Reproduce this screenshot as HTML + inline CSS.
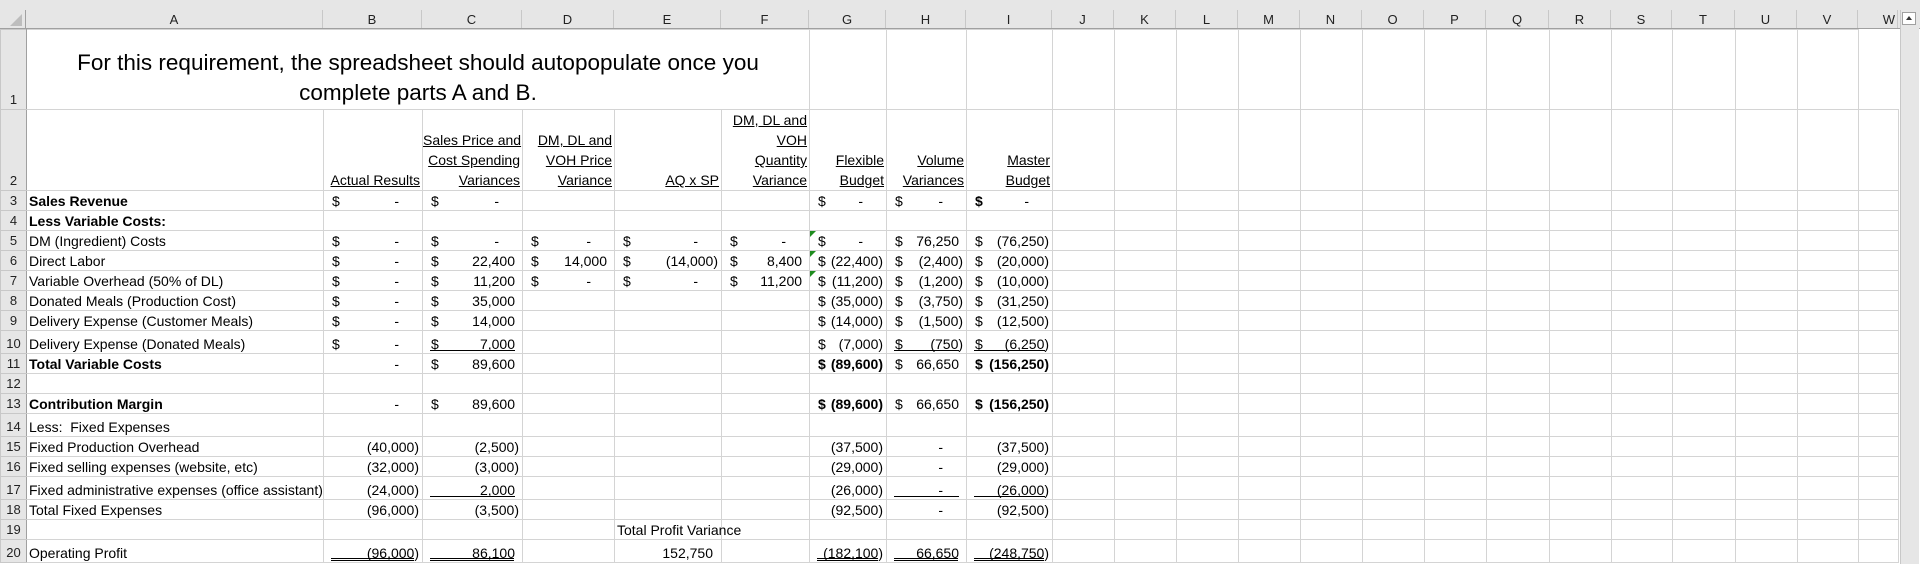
<!DOCTYPE html>
<html><head><meta charset="utf-8">
<style>
body{margin:0;width:1920px;height:564px;overflow:hidden;background:#fff;font-family:"Liberation Sans",Arial,sans-serif;font-size:14px;color:#000;position:relative}
#hdr{position:absolute;left:0;top:0;width:1920px;height:29px;background:#e6e6e6;border-bottom:1px solid #a0a0a0;box-sizing:border-box}
.ch{position:absolute;top:10px;height:18px;line-height:19px;text-align:center;font-size:13px;color:#222;border-right:1px solid #c8c8c8;box-sizing:border-box}
#tbl{position:absolute;left:0;top:29px;border-collapse:collapse;table-layout:fixed;width:1898px}
#tbl td{border:1px solid #d4d4d4;padding:0;vertical-align:bottom;line-height:18px;white-space:nowrap;overflow:visible;position:relative}
#tbl td.rh{background:#e6e6e6;border-color:#c8c8c8;border-right:1px solid #a0a0a0;text-align:center;font-size:13px;color:#222}
td.l{padding-left:2px!important}
.b{font-weight:bold}
.ac{display:flex;justify-content:space-between;padding:0 3px 0 8px}
.r{text-align:right;padding-right:3px!important}
.p{padding-right:4px}
.z{padding-right:20px}
.u::after{content:"";position:absolute;left:7px;right:7px;bottom:2px;border-bottom:1px solid #000}
.dd::after{content:"";position:absolute;left:7px;right:8px;bottom:1px;border-bottom:3px double #000}
.tri::before{content:"";position:absolute;left:0;top:0;border-top:6px solid #1e8c1e;border-right:6px solid transparent}
.hd span{text-decoration:underline}
.hd{text-align:right;padding-right:2px!important;line-height:20px!important}
#sb{position:absolute;left:1900px;top:10px;width:18px;height:554px;background:#e6e6e6;border-left:1px solid #c8c8c8}
#sbt{position:absolute;left:1902px;top:12px;width:14px;height:13px;background:#fff;border:1px solid #a0a0a0;box-sizing:border-box}
</style></head><body>
<div id="hdr">
<div style="position:absolute;left:10px;top:14px;width:0;height:0;border-left:12px solid transparent;border-bottom:12px solid #bdbdbd"></div>
<div class="ch" style="left:0;width:26px;border-right:1px solid #a0a0a0"></div>
<div class="ch" style="left:26px;width:297px">A</div>
<div class="ch" style="left:323px;width:99px">B</div>
<div class="ch" style="left:422px;width:100px">C</div>
<div class="ch" style="left:522px;width:92px">D</div>
<div class="ch" style="left:614px;width:107px">E</div>
<div class="ch" style="left:721px;width:88px">F</div>
<div class="ch" style="left:809px;width:77px">G</div>
<div class="ch" style="left:886px;width:80px">H</div>
<div class="ch" style="left:966px;width:86px">I</div>
<div class="ch" style="left:1052px;width:62px">J</div>
<div class="ch" style="left:1114px;width:62px">K</div>
<div class="ch" style="left:1176px;width:62px">L</div>
<div class="ch" style="left:1238px;width:62px">M</div>
<div class="ch" style="left:1300px;width:62px">N</div>
<div class="ch" style="left:1362px;width:62px">O</div>
<div class="ch" style="left:1424px;width:62px">P</div>
<div class="ch" style="left:1486px;width:63px">Q</div>
<div class="ch" style="left:1549px;width:62px">R</div>
<div class="ch" style="left:1611px;width:61px">S</div>
<div class="ch" style="left:1672px;width:63px">T</div>
<div class="ch" style="left:1735px;width:62px">U</div>
<div class="ch" style="left:1797px;width:61px">V</div>
<div class="ch" style="left:1858px;width:40px;text-align:right;padding-right:2px">W</div>
</div>
<table id="tbl">
<colgroup><col style="width:26px"><col style="width:297px"><col style="width:99px"><col style="width:100px"><col style="width:92px"><col style="width:107px"><col style="width:88px"><col style="width:77px"><col style="width:80px"><col style="width:86px"><col style="width:62px"><col style="width:62px"><col style="width:62px"><col style="width:62px"><col style="width:62px"><col style="width:62px"><col style="width:62px"><col style="width:63px"><col style="width:62px"><col style="width:61px"><col style="width:63px"><col style="width:62px"><col style="width:61px"><col style="width:40px"></colgroup>
<tr style="height:80px"><td class="rh">1</td><td colspan="6" style="text-align:center;font-size:22.5px;line-height:30px;padding-bottom:1px">For this requirement, the spreadsheet should autopopulate once you<br>complete parts A and B.</td><td></td><td></td><td></td><td></td><td></td><td></td><td></td><td></td><td></td><td></td><td></td><td></td><td></td><td></td><td></td><td></td></tr>
<tr style="height:80px"><td class="rh">2</td><td></td><td class="hd"><span>Actual Results</span></td><td class="hd"><span>Sales Price and</span><br><span>Cost Spending</span><br><span>Variances</span></td><td class="hd"><span>DM, DL and</span><br><span>VOH Price</span><br><span>Variance</span></td><td class="hd"><span>AQ x SP</span></td><td class="hd"><span>DM, DL and</span><br><span>VOH</span><br><span>Quantity</span><br><span>Variance</span></td><td class="hd"><span>Flexible</span><br><span>Budget</span></td><td class="hd"><span>Volume</span><br><span>Variances</span></td><td class="hd"><span>Master</span><br><span>Budget</span></td><td></td><td></td><td></td><td></td><td></td><td></td><td></td><td></td><td></td><td></td><td></td><td></td><td></td><td></td></tr>
<tr style="height:20px"><td class="rh">3</td><td class="l b">Sales Revenue</td><td><div class="ac"><span>$</span><span class="z">-</span></div></td><td><div class="ac"><span>$</span><span class="z">-</span></div></td><td></td><td></td><td></td><td><div class="ac"><span>$</span><span class="z">-</span></div></td><td><div class="ac"><span>$</span><span class="z">-</span></div></td><td><div class="ac"><span class="b">$</span><span class="z">-</span></div></td><td></td><td></td><td></td><td></td><td></td><td></td><td></td><td></td><td></td><td></td><td></td><td></td><td></td><td></td></tr>
<tr style="height:20px"><td class="rh">4</td><td class="l b">Less Variable Costs:</td><td></td><td></td><td></td><td></td><td></td><td></td><td></td><td></td><td></td><td></td><td></td><td></td><td></td><td></td><td></td><td></td><td></td><td></td><td></td><td></td><td></td><td></td></tr>
<tr style="height:20px"><td class="rh">5</td><td class="l">DM (Ingredient) Costs</td><td><div class="ac"><span>$</span><span class="z">-</span></div></td><td><div class="ac"><span>$</span><span class="z">-</span></div></td><td><div class="ac"><span>$</span><span class="z">-</span></div></td><td><div class="ac"><span>$</span><span class="z">-</span></div></td><td><div class="ac"><span>$</span><span class="z">-</span></div></td><td class="tri"><div class="ac"><span>$</span><span class="z">-</span></div></td><td><div class="ac"><span>$</span><span class="p">76,250</span></div></td><td><div class="ac"><span>$</span><span>(76,250)</span></div></td><td></td><td></td><td></td><td></td><td></td><td></td><td></td><td></td><td></td><td></td><td></td><td></td><td></td><td></td></tr>
<tr style="height:20px"><td class="rh">6</td><td class="l">Direct Labor</td><td><div class="ac"><span>$</span><span class="z">-</span></div></td><td><div class="ac"><span>$</span><span class="p">22,400</span></div></td><td><div class="ac"><span>$</span><span class="p">14,000</span></div></td><td><div class="ac"><span>$</span><span>(14,000)</span></div></td><td><div class="ac"><span>$</span><span class="p">8,400</span></div></td><td class="tri"><div class="ac"><span>$</span><span>(22,400)</span></div></td><td><div class="ac"><span>$</span><span>(2,400)</span></div></td><td><div class="ac"><span>$</span><span>(20,000)</span></div></td><td></td><td></td><td></td><td></td><td></td><td></td><td></td><td></td><td></td><td></td><td></td><td></td><td></td><td></td></tr>
<tr style="height:20px"><td class="rh">7</td><td class="l">Variable Overhead (50% of DL)</td><td><div class="ac"><span>$</span><span class="z">-</span></div></td><td><div class="ac"><span>$</span><span class="p">11,200</span></div></td><td><div class="ac"><span>$</span><span class="z">-</span></div></td><td><div class="ac"><span>$</span><span class="z">-</span></div></td><td><div class="ac"><span>$</span><span class="p">11,200</span></div></td><td class="tri"><div class="ac"><span>$</span><span>(11,200)</span></div></td><td><div class="ac"><span>$</span><span>(1,200)</span></div></td><td><div class="ac"><span>$</span><span>(10,000)</span></div></td><td></td><td></td><td></td><td></td><td></td><td></td><td></td><td></td><td></td><td></td><td></td><td></td><td></td><td></td></tr>
<tr style="height:20px"><td class="rh">8</td><td class="l">Donated Meals (Production Cost)</td><td><div class="ac"><span>$</span><span class="z">-</span></div></td><td><div class="ac"><span>$</span><span class="p">35,000</span></div></td><td></td><td></td><td></td><td><div class="ac"><span>$</span><span>(35,000)</span></div></td><td><div class="ac"><span>$</span><span>(3,750)</span></div></td><td><div class="ac"><span>$</span><span>(31,250)</span></div></td><td></td><td></td><td></td><td></td><td></td><td></td><td></td><td></td><td></td><td></td><td></td><td></td><td></td><td></td></tr>
<tr style="height:20px"><td class="rh">9</td><td class="l">Delivery Expense (Customer Meals)</td><td><div class="ac"><span>$</span><span class="z">-</span></div></td><td><div class="ac"><span>$</span><span class="p">14,000</span></div></td><td></td><td></td><td></td><td><div class="ac"><span>$</span><span>(14,000)</span></div></td><td><div class="ac"><span>$</span><span>(1,500)</span></div></td><td><div class="ac"><span>$</span><span>(12,500)</span></div></td><td></td><td></td><td></td><td></td><td></td><td></td><td></td><td></td><td></td><td></td><td></td><td></td><td></td><td></td></tr>
<tr style="height:23px"><td class="rh">10</td><td class="l">Delivery Expense (Donated Meals)</td><td><div class="ac"><span>$</span><span class="z">-</span></div></td><td class="u"><div class="ac"><span>$</span><span class="p">7,000</span></div></td><td></td><td></td><td></td><td><div class="ac"><span>$</span><span>(7,000)</span></div></td><td class="u"><div class="ac"><span>$</span><span>(750)</span></div></td><td class="u"><div class="ac"><span>$</span><span>(6,250)</span></div></td><td></td><td></td><td></td><td></td><td></td><td></td><td></td><td></td><td></td><td></td><td></td><td></td><td></td><td></td></tr>
<tr style="height:20px"><td class="rh">11</td><td class="l b">Total Variable Costs</td><td><div class="ac"><span></span><span class="z">-</span></div></td><td><div class="ac"><span>$</span><span class="p">89,600</span></div></td><td></td><td></td><td></td><td><div class="ac b"><span>$</span><span>(89,600)</span></div></td><td><div class="ac"><span>$</span><span class="p">66,650</span></div></td><td><div class="ac b"><span>$</span><span>(156,250)</span></div></td><td></td><td></td><td></td><td></td><td></td><td></td><td></td><td></td><td></td><td></td><td></td><td></td><td></td><td></td></tr>
<tr style="height:20px"><td class="rh">12</td><td></td><td></td><td></td><td></td><td></td><td></td><td></td><td></td><td></td><td></td><td></td><td></td><td></td><td></td><td></td><td></td><td></td><td></td><td></td><td></td><td></td><td></td><td></td></tr>
<tr style="height:20px"><td class="rh">13</td><td class="l b">Contribution Margin</td><td><div class="ac"><span></span><span class="z">-</span></div></td><td><div class="ac"><span>$</span><span class="p">89,600</span></div></td><td></td><td></td><td></td><td><div class="ac b"><span>$</span><span>(89,600)</span></div></td><td><div class="ac"><span>$</span><span class="p">66,650</span></div></td><td><div class="ac b"><span>$</span><span>(156,250)</span></div></td><td></td><td></td><td></td><td></td><td></td><td></td><td></td><td></td><td></td><td></td><td></td><td></td><td></td><td></td></tr>
<tr style="height:23px"><td class="rh">14</td><td class="l" style="white-space:pre">Less:  Fixed Expenses</td><td></td><td></td><td></td><td></td><td></td><td></td><td></td><td></td><td></td><td></td><td></td><td></td><td></td><td></td><td></td><td></td><td></td><td></td><td></td><td></td><td></td><td></td></tr>
<tr style="height:20px"><td class="rh">15</td><td class="l">Fixed Production Overhead</td><td class="r">(40,000)</td><td class="r">(2,500)</td><td></td><td></td><td></td><td class="r">(37,500)</td><td class="r"><span class="z">-</span></td><td class="r">(37,500)</td><td></td><td></td><td></td><td></td><td></td><td></td><td></td><td></td><td></td><td></td><td></td><td></td><td></td><td></td></tr>
<tr style="height:20px"><td class="rh">16</td><td class="l">Fixed selling expenses (website, etc)</td><td class="r">(32,000)</td><td class="r">(3,000)</td><td></td><td></td><td></td><td class="r">(29,000)</td><td class="r"><span class="z">-</span></td><td class="r">(29,000)</td><td></td><td></td><td></td><td></td><td></td><td></td><td></td><td></td><td></td><td></td><td></td><td></td><td></td><td></td></tr>
<tr style="height:23px"><td class="rh">17</td><td class="l">Fixed administrative expenses (office assistant)</td><td class="r">(24,000)</td><td class="r u"><span class="p">2,000</span></td><td></td><td></td><td></td><td class="r">(26,000)</td><td class="r u"><span class="z">-</span></td><td class="r u">(26,000)</td><td></td><td></td><td></td><td></td><td></td><td></td><td></td><td></td><td></td><td></td><td></td><td></td><td></td><td></td></tr>
<tr style="height:20px"><td class="rh">18</td><td class="l">Total Fixed Expenses</td><td class="r">(96,000)</td><td class="r">(3,500)</td><td></td><td></td><td></td><td class="r">(92,500)</td><td class="r"><span class="z">-</span></td><td class="r">(92,500)</td><td></td><td></td><td></td><td></td><td></td><td></td><td></td><td></td><td></td><td></td><td></td><td></td><td></td><td></td></tr>
<tr style="height:20px"><td class="rh">19</td><td></td><td></td><td></td><td></td><td class="l" style="overflow:visible">Total Profit Variance</td><td></td><td></td><td></td><td></td><td></td><td></td><td></td><td></td><td></td><td></td><td></td><td></td><td></td><td></td><td></td><td></td><td></td><td></td></tr>
<tr style="height:23px"><td class="rh">20</td><td class="l">Operating Profit</td><td class="r dd">(96,000)</td><td class="r dd"><span class="p">86,100</span></td><td></td><td class="r" style="padding-right:8px!important">152,750</td><td></td><td class="r dd">(182,100)</td><td class="r dd"><span class="p">66,650</span></td><td class="r dd">(248,750)</td><td></td><td></td><td></td><td></td><td></td><td></td><td></td><td></td><td></td><td></td><td></td><td></td><td></td><td></td></tr>
</table>
<div id="sb"></div>
<div id="sbt"><div style="position:absolute;left:3px;top:3px;width:0;height:0;border-left:3px solid transparent;border-right:3px solid transparent;border-bottom:4px solid #333"></div></div>
</body></html>
